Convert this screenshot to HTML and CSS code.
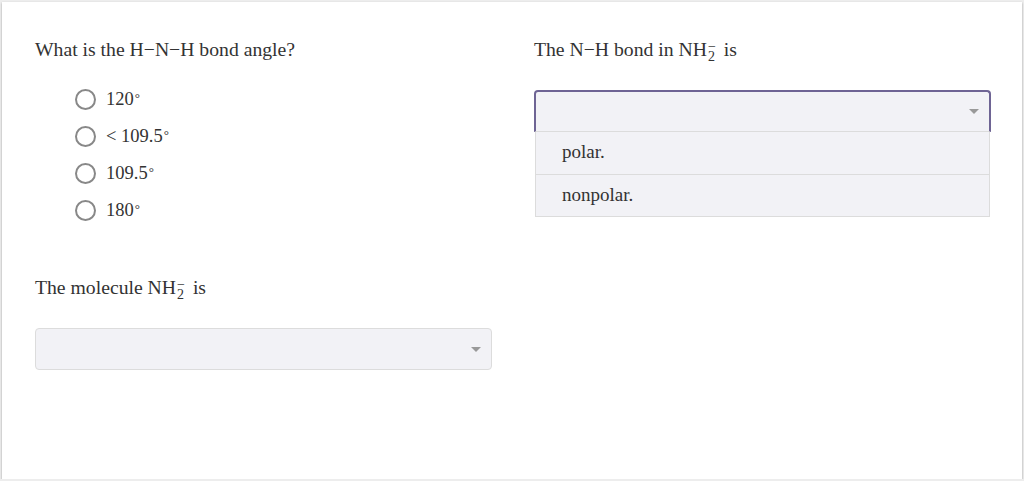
FILE: index.html
```html
<!DOCTYPE html>
<html lang="en">
<head>
  <meta charset="UTF-8" />
  <title>Quiz</title>
  <link rel="stylesheet" href="styles.css">
</head>
<body>
  <div class="card">
    <div class="col">
      <div class="question">
        <p class="prompt">What is the H&minus;N&minus;H bond angle?</p>
        <ul class="options">
          <li><span class="radio"></span>120<span class="deg">&deg;</span></li>
          <li><span class="radio"></span>&lt; 109.5<span class="deg">&deg;</span></li>
          <li><span class="radio"></span>109.5<span class="deg">&deg;</span></li>
          <li><span class="radio"></span>180<span class="deg">&deg;</span></li>
        </ul>
      </div>

      <div class="question">
        <p class="prompt">The molecule NH<span class="ion"><span class="sup">&minus;</span><span class="sub">2</span></span> is</p>
        <div class="select">
          <span class="caret"></span>
        </div>
      </div>
    </div>

    <div class="col">
      <div class="question">
        <p class="prompt">The N&minus;H bond in NH<span class="ion"><span class="sup">&minus;</span><span class="sub">2</span></span> is</p>
        <div class="dropdown">
          <div class="select open">
            <span class="caret"></span>
          </div>
          <div class="menu">
            <div class="item">polar.</div>
            <div class="item">nonpolar.</div>
          </div>
        </div>
      </div>
    </div>
  </div>
</body>
</html>
```

FILE: styles.css
```css
body {
  margin: 0;
  padding: 2px 2px 0 2px;
  background-color: #ededed;
  font-family: "Liberation Serif", "Times New Roman", serif;
  color: #333;
}

.card {
  box-sizing: border-box;
  height: 477px;
  background-color: white;
  box-shadow: 0 1px 2px rgba(0,0,0,0.35);
  padding: 32px 29px 0 33px;
  display: grid;
  grid-template-columns: 457px 457px;
  column-gap: 42px;
}

.prompt {
  margin: 3px 0 0 0;
  font-size: 19.7px;
  line-height: 24px;
}

.ion {
  display: inline-block;
  vertical-align: -5px;
  font-size: 14px;
  line-height: 10px;
  margin-left: 1px;
  margin-right: 3px;
}

.ion span {
  display: block;
}

.options {
  list-style: none;
  margin: 20px 0 0 0;
  padding: 0 0 0 40px;
}

.options li {
  display: flex;
  align-items: center;
  height: 37px;
  font-size: 18.5px;
}

.radio {
  box-sizing: border-box;
  width: 21px;
  height: 21px;
  border: 2px solid #888;
  border-radius: 50%;
  margin-right: 10px;
}

.deg {
  font-size: 13px;
  align-self: flex-start;
  margin-top: 9px;
  margin-left: 1px;
}

.question + .question {
  margin-top: 46px;
}

.select {
  box-sizing: border-box;
  height: 42px;
  margin-top: 28px;
  background-color: #f2f2f6;
  border: 1px solid #dcdcdc;
  border-radius: 4px;
  display: flex;
  align-items: center;
  justify-content: flex-end;
  padding-right: 10px;
}

.caret {
  width: 0;
  height: 0;
  border-left: 5px solid transparent;
  border-right: 5px solid transparent;
  border-top: 5px solid #999;
}

.select.open {
  border: 2px solid #6e6494;
  border-bottom: 1px solid #dcdcdc;
  border-radius: 4px 4px 0 0;
}

.menu {
  background-color: #f2f2f6;
  border: 1px solid #dcdcdc;
  border-top: none;
  margin: 0 1px;
}

.item {
  height: 42px;
  line-height: 40px;
  padding-left: 26px;
  font-size: 19px;
}

.item + .item {
  border-top: 1px solid #dcdcdc;
  height: 41px;
}
```
